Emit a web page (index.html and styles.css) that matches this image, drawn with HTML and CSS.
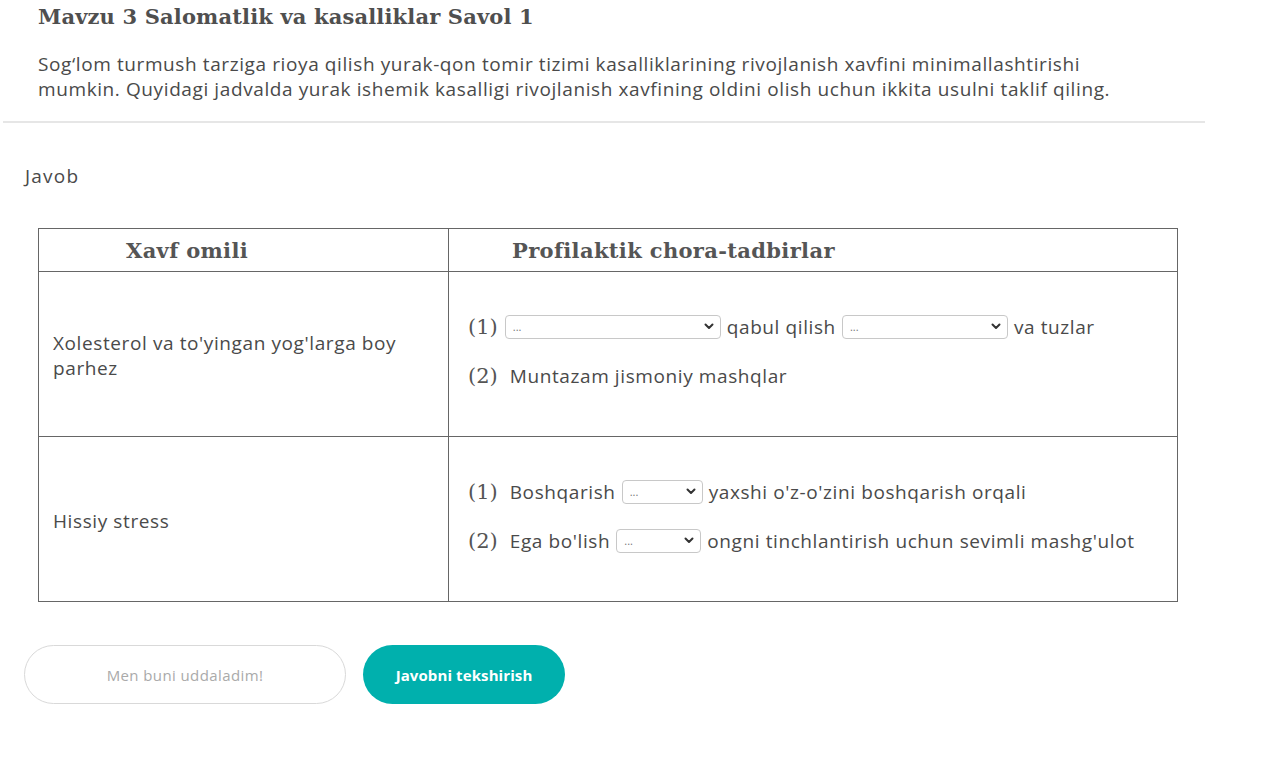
FILE: index.html
```html
<!DOCTYPE html>
<html lang="uz">
<head>
<meta charset="utf-8">
<title>Mavzu 3 Salomatlik va kasalliklar Savol 1</title>
<link rel="stylesheet" href="styles.css">
</head>
<body>
<div class="question">
  <h1 class="title">Mavzu 3 Salomatlik va kasalliklar Savol 1</h1>
  <p class="lead">Sog‘lom turmush tarziga rioya qilish yurak-qon tomir tizimi kasalliklarining rivojlanish xavfini minimallashtirishi<br>mumkin. Quyidagi jadvalda yurak ishemik kasalligi rivojlanish xavfining oldini olish uchun ikkita usulni taklif qiling.</p>
</div>
<div class="rule"></div>
<div class="answer-label">Javob</div>
<table class="grid">
  <thead>
    <tr>
      <th class="h1c">Xavf omili</th>
      <th class="h2c">Profilaktik chora-tadbirlar</th>
    </tr>
  </thead>
  <tbody>
    <tr>
      <td class="factor">Xolesterol va to'yingan yog'larga boy parhez</td>
      <td class="measures">
        <div class="item"><span class="num">(1)</span><select class="pick w216"><option>...</option></select><span>qabul qilish</span><select class="pick w166"><option>...</option></select><span>va tuzlar</span></div>
        <div class="item"><span class="num">(2)</span><span class="lead-text">Muntazam jismoniy mashqlar</span></div>
      </td>
    </tr>
    <tr>
      <td class="factor">Hissiy stress</td>
      <td class="measures">
        <div class="item"><span class="num">(1)</span><span class="lead-text">Boshqarish</span><select class="pick w81"><option>...</option></select><span>yaxshi o'z-o'zini boshqarish orqali</span></div>
        <div class="item"><span class="num">(2)</span><span class="lead-text">Ega bo'lish</span><select class="pick w85"><option>...</option></select><span>ongni tinchlantirish uchun sevimli mashg'ulot</span></div>
      </td>
    </tr>
  </tbody>
</table>
<div class="actions">
  <button class="btn btn-ghost">Men buni uddaladim!</button>
  <button class="btn btn-primary">Javobni tekshirish</button>
</div>
</body>
</html>
```
FILE: styles.css
```css
html, body {
  margin: 0;
  padding: 0;
  background: #ffffff;
}
body {
  font-family: "Open Sans", "Lato", sans-serif;
  color: #4a4a4a;
  font-size: 19px;
  letter-spacing: 0.6px;
}
.question {
  padding: 0 0 0 38px;
}
.title {
  font-family: "DejaVu Serif", "Liberation Serif", serif;
  font-weight: bold;
  font-size: 21px;
  letter-spacing: 0.15px;
  color: #4f4f4f;
  margin: 0;
  padding-top: 4px;
  line-height: 26px;
}
.lead {
  margin: 22px 0 0 0;
  line-height: 25px;
  color: #4a4a4a;
}
.rule {
  margin: 19px 0 0 3px;
  width: 1202px;
  height: 2px;
  background: #e6e6e6;
}
.answer-label {
  margin: 41px 0 0 25px;
  line-height: 24px;
  letter-spacing: 1.2px;
}
.grid {
  margin: 40px 0 0 38px;
  width: 1140px;
  border-collapse: collapse;
}
.grid th, .grid td {
  border: 1px solid #666;
  padding: 0;
}
.grid th {
  font-family: "DejaVu Serif", "Liberation Serif", serif;
  font-weight: bold;
  font-size: 21px;
  letter-spacing: 0.35px;
  color: #555;
  height: 42px;
  text-align: left;
}
.h1c {
  width: 410px;
  padding-left: 87px !important;
  box-sizing: border-box;
}
.h2c {
  padding-left: 63px !important;
}
.grid td {
  height: 158px;
  vertical-align: middle;
}
.factor {
  padding: 4px 14px 0 14px !important;
  line-height: 25px;
}
.measures {
  padding: 0 19px 6px 19px !important;
}
.item {
  display: flex;
  align-items: center;
  gap: 6px;
  height: 37px;
  white-space: nowrap;
}
.item + .item {
  margin-top: 12px;
}
.num {
  font-family: "DejaVu Serif", "Liberation Serif", serif;
  font-size: 21px;
  letter-spacing: 0;
  color: #555;
  margin-right: 1px;
}
.lead-text {
  margin-left: 5px;
}
.pick {
  appearance: none;
  -webkit-appearance: none;
  height: 24px;
  border: 1px solid #c8c8c8;
  border-radius: 4px;
  background: #fff url("data:image/svg+xml;utf8,<svg xmlns='http://www.w3.org/2000/svg' width='10' height='7' viewBox='0 0 10 7'><path d='M1.5 1.5 L5 5 L8.5 1.5' fill='none' stroke='%23333' stroke-width='2' stroke-linecap='round' stroke-linejoin='round'/></svg>") no-repeat right 6px center;
  font-family: "Open Sans", sans-serif;
  font-size: 11px;
  letter-spacing: 0;
  color: #777;
  padding: 0 0 0 7px;
  margin: 0;
}
.w216 { width: 216px; }
.w166 { width: 166px; }
.w81 { width: 81px; }
.w85 { width: 85px; }
.actions {
  display: flex;
  gap: 17px;
  margin: 43px 0 0 24px;
}
.btn {
  height: 59px;
  border-radius: 30px;
  font-family: "Open Sans", sans-serif;
  font-size: 15px;
  letter-spacing: 0.4px;
  cursor: pointer;
}
.btn-ghost {
  width: 322px;
  background: #fff;
  border: 1px solid #d9d9d9;
  color: #aaaaaa;
}
.btn-primary {
  width: 202px;
  background: #00b0ad;
  border: none;
  color: #fff;
  font-weight: bold;
  letter-spacing: 0.1px;
}
```
